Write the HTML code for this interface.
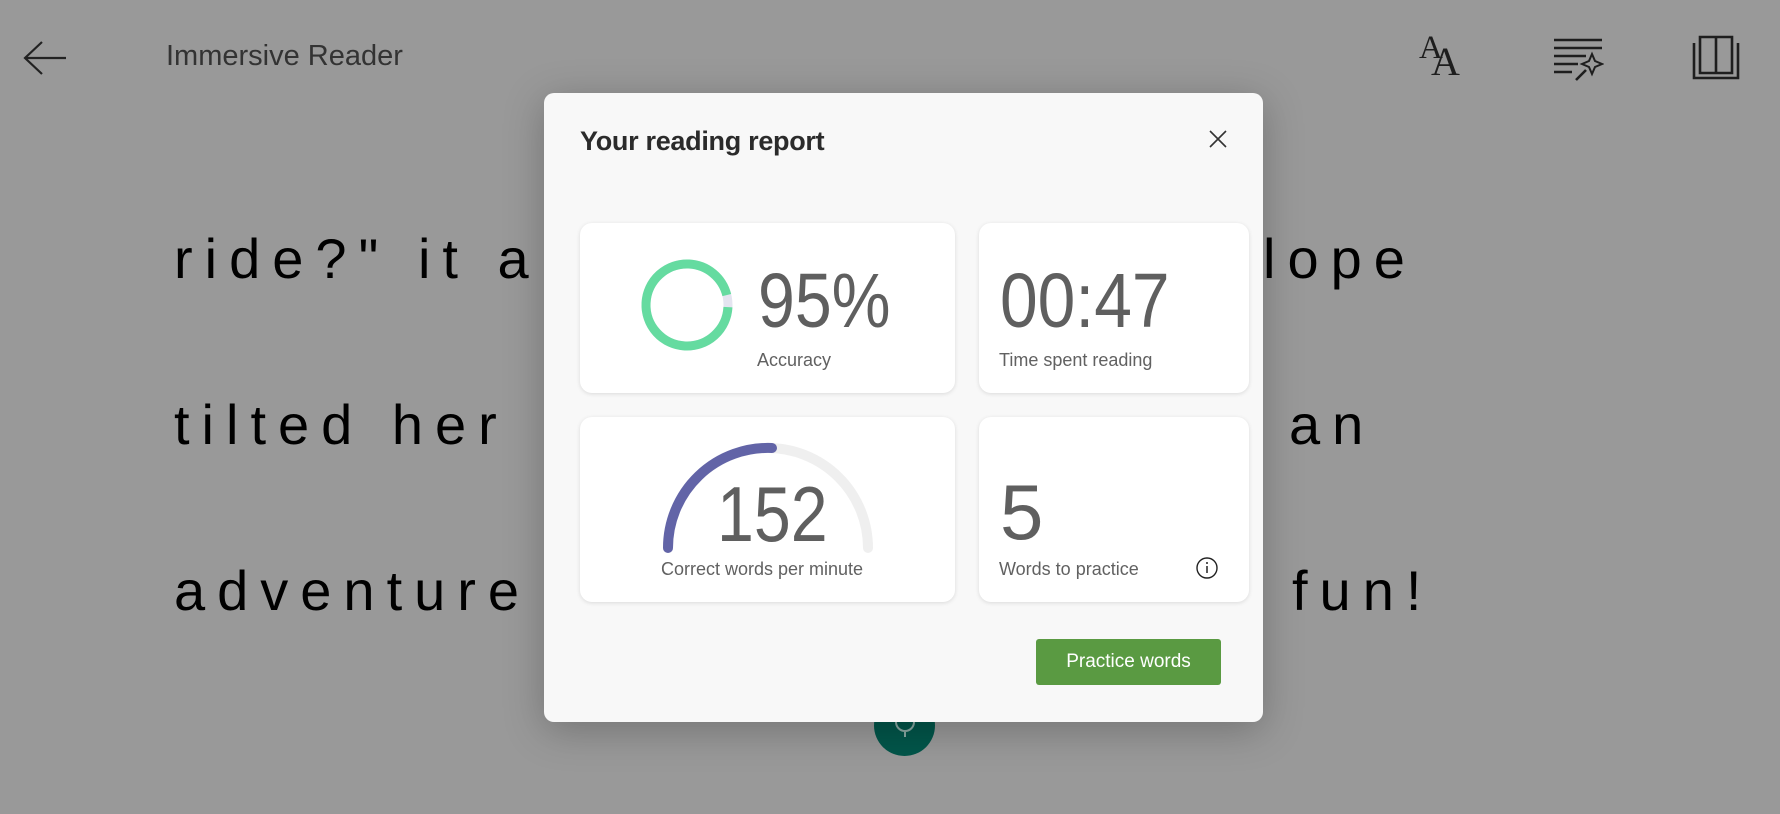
<!DOCTYPE html>
<html><head><meta charset="utf-8">
<style>
*{margin:0;padding:0;box-sizing:border-box}
body{width:1780px;height:814px;background:#999;position:relative;overflow:hidden;font-family:"Liberation Sans",sans-serif}
.t{position:absolute;font-size:56px;letter-spacing:12px;color:#000;line-height:1;white-space:pre}
.modal{position:absolute;left:544px;top:93px;width:719px;height:629px;background:#f8f8f8;border-radius:10px;box-shadow:0 8px 40px rgba(0,0,0,.25)}
.card{position:absolute;background:#fff;border-radius:12px;box-shadow:0 1px 4px rgba(0,0,0,.12)}
.big{position:absolute;color:#5f5f5f;font-size:77px;line-height:1;transform-origin:0 0;white-space:nowrap}
.lbl{position:absolute;color:#616161;font-size:18px;line-height:1;white-space:nowrap}
</style></head><body>
<svg style="position:absolute;left:22px;top:40px" width="46" height="36" viewBox="0 0 46 36"><path d="M44 18H3M20 2L3 18l17 16" fill="none" stroke="#222" stroke-width="2.2"/></svg>
<div style="position:absolute;left:166px;top:40px;font-size:29px;color:#333">Immersive Reader</div>
<div style="position:absolute;left:1419px;top:32px;width:50px;height:50px;font-family:'Liberation Serif',serif;color:#1e1e1e;line-height:1">
<span style="position:absolute;left:0;top:0;font-size:33px">A</span><span style="position:absolute;left:12px;top:10px;font-size:40px">A</span></div>
<svg style="position:absolute;left:1552px;top:38px" width="52" height="44" viewBox="0 0 52 44"><g stroke="#1e1e1e" stroke-width="2.6" fill="none"><path d="M2 2h48M2 10h48M2 18h32M2 26h24M2 34h18M24 42l10-10"/><path d="M40 16l3 7 7 3-7 3-3 7-3-7-7-3 7-3z" stroke-width="2"/></g></svg>
<svg style="position:absolute;left:1692px;top:34px" width="48" height="46" viewBox="0 0 48 46"><g stroke="#1e1e1e" stroke-width="2.6" fill="none"><path d="M2 9v35h44V9"/><path d="M8 3h16v36H8zM24 3h16v36H24z"/></g></svg>

<div class="t" style="left:174px;top:231px">ride?" it a</div>
<div class="t" style="left:1263px;top:231px">lope</div>
<div class="t" style="left:174px;top:397px">tilted her</div>
<div class="t" style="left:1289px;top:397px">an</div>
<div class="t" style="left:174px;top:563px">adventure</div>
<div class="t" style="left:1292px;top:563px">fun!</div>

<div style="position:absolute;left:874px;top:695px;width:61px;height:61px;border-radius:50%;background:#02564a"></div>
<svg style="position:absolute;left:892px;top:718px" width="26" height="22" viewBox="0 0 26 22"><path d="M4 4a9 9 0 0 0 18 0M13 13v6" fill="none" stroke="#8aa9a3" stroke-width="2"/></svg>

<div class="modal">
<div style="position:absolute;left:36px;top:33px;font-size:27px;font-weight:bold;color:#2b2b2b;letter-spacing:-0.3px">Your reading report</div>
<svg style="position:absolute;left:665px;top:37px" width="18" height="18" viewBox="0 0 18 18"><path d="M1 1l16 16M17 1L1 17" stroke="#333" stroke-width="1.6"/></svg>

<div class="card" style="left:36px;top:130px;width:375px;height:170px">
<svg style="position:absolute;left:61px;top:36px" width="92" height="92" viewBox="0 0 92 92"><circle cx="46" cy="46" r="41" fill="none" stroke="#e4e4f0" stroke-width="9"/><circle cx="46" cy="46" r="41" fill="none" stroke="#65dba0" stroke-width="9" stroke-dasharray="245 300" transform="rotate(3 46 46)"/></svg>
<div class="big" style="left:178px;top:40px;transform:scaleX(.86)">95%</div>
<div class="lbl" style="left:177px;top:128px">Accuracy</div>
</div>

<div class="card" style="left:435px;top:130px;width:270px;height:170px">
<div class="big" style="left:21px;top:40px;transform:scaleX(.88)">00:47</div>
<div class="lbl" style="left:20px;top:128px">Time spent reading</div>
</div>

<div class="card" style="left:36px;top:324px;width:375px;height:185px">
<svg style="position:absolute;left:0;top:0" width="375" height="185"><path d="M88 131A100 100 0 0 1 288 131" fill="none" stroke="#efefef" stroke-width="10" stroke-linecap="round"/><path d="M88 131A100 100 0 0 1 192 31" fill="none" stroke="#6264a7" stroke-width="10" stroke-linecap="round"/></svg>
<div class="big" style="left:137px;top:58px;font-size:78px;transform:scaleX(.85)">152</div>
<div class="lbl" style="left:81px;top:143px">Correct words per minute</div>
</div>

<div class="card" style="left:435px;top:324px;width:270px;height:185px">
<div class="big" style="left:21px;top:56px;font-size:78px">5</div>
<div class="lbl" style="left:20px;top:143px">Words to practice</div>
<svg style="position:absolute;left:216px;top:139px" width="24" height="24" viewBox="0 0 24 24"><circle cx="12" cy="12" r="10" fill="none" stroke="#222" stroke-width="1.4"/><path d="M12 10v7" stroke="#222" stroke-width="1.5"/><circle cx="12" cy="7" r="1" fill="#222"/></svg>
</div>

<div style="position:absolute;left:492px;top:546px;width:185px;height:46px;background:#5a9a42;border-radius:3px;color:#fff;font-size:19px;line-height:46px;text-align:center">Practice words</div>
</div>
</body></html>
